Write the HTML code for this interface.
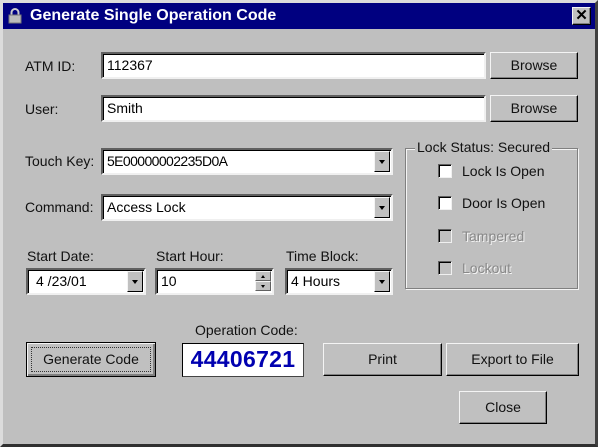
<!DOCTYPE html>
<html><head><style>
*{margin:0;padding:0;box-sizing:border-box}
body{width:600px;height:447px;background:#fff;position:relative;overflow:hidden;font-family:"Liberation Sans",sans-serif;font-size:14px;color:#000}
.win{position:absolute;left:0;top:0;width:598px;height:447px;background:#bfbfbf;border:3px solid;border-color:#dcdcdc #404040 #303030 #dcdcdc}
.title{position:absolute;left:3px;top:3px;width:592px;height:26px;background:#000080;color:#fff;font-weight:bold;font-size:16px;line-height:26px}
.a{position:absolute}
.lbl{position:absolute;font-size:14px;color:#111}
.in{position:absolute;background:#fff;border:2px solid;border-color:#606060 #f0f0f0 #f0f0f0 #606060;box-shadow:inset 1px 1px 0 #000;font-size:14px;padding-left:4px;line-height:22px}
.btn{position:absolute;background:#c0c0c0;border:1px solid;border-color:#f4f4f4 #000 #000 #f4f4f4;box-shadow:inset -1px -1px 0 #808080;text-align:center;font-size:14px;color:#111}
.dd{position:absolute;right:1px;top:1px;width:16px;bottom:1px;background:#c0c0c0;border:1px solid;border-color:#f4f4f4 #000 #000 #f4f4f4}
.dd:after{content:"";position:absolute;left:4px;top:8px;border:3px solid transparent;border-top:4px solid #000;border-bottom:0}
.cb{position:absolute;width:14px;height:14px;background:#fff;border:1px solid;border-color:#606060 #f0f0f0 #f0f0f0 #606060;box-shadow:inset 1px 1px 0 #000}
.cb.d{background:#c0c0c0}
.dis{color:#888;text-shadow:1px 1px 0 #f4f4f4}
.sp{position:absolute;right:1px;width:16px;height:10px;background:#c0c0c0;border:1px solid;border-color:#f4f4f4 #606060 #606060 #f4f4f4}
.sp:after{content:"";position:absolute;left:5px;top:3px;border:2px solid transparent}
.up:after{border-bottom:3px solid #000;border-top:0}
.dn:after{border-top:3px solid #000;border-bottom:0}
</style></head><body>
<div class="win"></div>
<div class="title"><span style="position:absolute;left:27px;top:0">Generate Single Operation Code</span>
<svg class="a" style="left:5px;top:5px" width="14" height="16"><path d="M3.5 7V4.5a3.5 3.5 0 0 1 7 0V7" stroke="#ccc" stroke-width="2" fill="none"/><rect x="1" y="7" width="12" height="8" fill="#bbb" stroke="#777"/></svg>
<div class="btn" style="left:569px;top:4px;width:19px;height:18px;line-height:15px;font-size:15px;font-weight:bold;color:#000">✕</div>
</div>

<div class="lbl" style="left:25px;top:58px">ATM ID:</div>
<div class="in" style="left:101px;top:52px;width:385px;height:27px">112367</div>
<div class="btn" style="left:490px;top:52px;width:88px;height:27px;line-height:25px">Browse</div>

<div class="lbl" style="left:25px;top:101px">User:</div>
<div class="in" style="left:101px;top:95px;width:385px;height:27px">Smith</div>
<div class="btn" style="left:490px;top:95px;width:88px;height:27px;line-height:25px">Browse</div>

<div class="lbl" style="left:25px;top:153px">Touch Key:</div>
<div class="in" style="left:101px;top:148px;width:292px;height:27px;letter-spacing:-0.6px">5E00000002235D0A<div class="dd"></div></div>
<div class="lbl" style="left:25px;top:199px">Command:</div>
<div class="in" style="left:101px;top:194px;width:292px;height:27px">Access Lock<div class="dd"></div></div>

<div class="a" style="left:405px;top:148px;width:173px;height:141px;border:1px solid #808080;box-shadow:1px 1px 0 #f4f4f4,inset 1px 1px 0 #f4f4f4"></div>
<div class="lbl" style="left:415px;top:139px;background:#bfbfbf;padding:0 2px">Lock Status: Secured</div>
<div class="cb" style="left:438px;top:164px"></div><div class="lbl" style="left:462px;top:163px">Lock Is Open</div>
<div class="cb" style="left:438px;top:196px"></div><div class="lbl" style="left:462px;top:195px">Door Is Open</div>
<div class="cb d" style="left:438px;top:229px"></div><div class="lbl dis" style="left:462px;top:228px">Tampered</div>
<div class="cb d" style="left:438px;top:261px"></div><div class="lbl dis" style="left:462px;top:260px">Lockout</div>

<div class="lbl" style="left:27px;top:248px">Start Date:</div>
<div class="lbl" style="left:156px;top:248px">Start Hour:</div>
<div class="lbl" style="left:286px;top:248px">Time Block:</div>
<div class="in" style="left:26px;top:268px;width:120px;height:27px;padding-left:8px">4 /23/01<div class="dd"></div></div>
<div class="in" style="left:155px;top:268px;width:119px;height:27px">10
<div class="sp up" style="top:1px"></div><div class="sp dn" style="top:11px"></div></div>
<div class="in" style="left:285px;top:268px;width:108px;height:27px">4 Hours<div class="dd"></div></div>

<div class="lbl" style="left:195px;top:322px">Operation Code:</div>
<div class="btn" style="left:26px;top:342px;width:130px;height:35px;border:1px solid #000;box-shadow:inset 1px 1px 0 #f4f4f4,inset -2px -2px 0 #808080"><div style="margin:4px;border:1px dotted #333;line-height:23px">Generate Code</div></div>
<div class="a" style="left:182px;top:343px;width:122px;height:34px;background:#fff;border:1px solid;border-color:#000 #444 #444 #000;color:#0000b0;font-size:23px;font-weight:bold;line-height:31px;text-align:center;letter-spacing:0.3px">44406721</div>
<div class="btn" style="left:323px;top:343px;width:119px;height:33px;line-height:31px">Print</div>
<div class="btn" style="left:446px;top:343px;width:133px;height:33px;line-height:31px">Export to File</div>
<div class="btn" style="left:459px;top:391px;width:88px;height:33px;line-height:31px">Close</div>
</body></html>
